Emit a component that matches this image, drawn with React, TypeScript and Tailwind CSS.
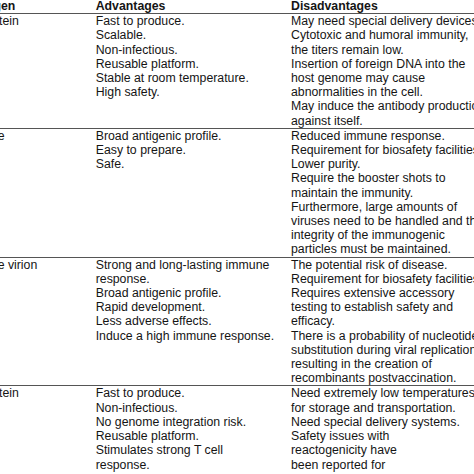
type Row = {
  antigen: string;
  adv: string[];
  dis: string[];
};

const rows: Row[] = [
  {
    antigen: 'S protein',
    adv: [
      'Fast to produce.',
      'Scalable.',
      'Non-infectious.',
      'Reusable platform.',
      'Stable at room temperature.',
      'High safety.',
    ],
    dis: [
      'May need special delivery devices.',
      'Cytotoxic and humoral immunity, the titers remain low.',
      'Insertion of foreign DNA into the host genome may cause abnormalities in the cell.',
      'May induce the antibody production against itself.',
    ],
  },
  {
    antigen: 'Whole',
    adv: ['Broad antigenic profile.', 'Easy to prepare.', 'Safe.'],
    dis: [
      'Reduced immune response.',
      'Requirement for biosafety facilities.',
      'Lower purity.',
      'Require the booster shots to maintain the immunity.',
      'Furthermore, large amounts of viruses need to be handled and the integrity of the immunogenic particles must be maintained.',
    ],
  },
  {
    antigen: 'Whole virion',
    adv: [
      'Strong and long-lasting immune response.',
      'Broad antigenic profile.',
      'Rapid development.',
      'Less adverse effects.',
      'Induce a high immune response.',
    ],
    dis: [
      'The potential risk of disease.',
      'Requirement for biosafety facilities.',
      'Requires extensive accessory testing to establish safety and efficacy.',
      'There is a probability of nucleotide substitution during viral replication, resulting in the creation of recombinants postvaccination.',
    ],
  },
  {
    antigen: 'S protein',
    adv: [
      'Fast to produce.',
      'Non-infectious.',
      'No genome integration risk.',
      'Reusable platform.',
      'Stimulates strong T cell response.',
    ],
    dis: [
      'Need extremely low temperatures for storage and transportation.',
      'Need special delivery systems.',
      'Safety issues with\nreactogenicity have\nbeen reported for\nmRNA vaccines.',
    ],
  },
];

const grid = 'grid grid-cols-[126.1px_195.3px_196px] border-b border-[#555]';

export default function App() {
  return (
    <div className="w-[474px] h-[474px] overflow-hidden bg-white text-[#151515] text-[12.3px] leading-[14.2px] font-['Liberation_Sans',Arial,sans-serif]">
      <div className="-ml-[30.4px] -mt-[1px] w-[520px]">
        {/* header */}
        <div className={`${grid} font-bold`}>
          <div className="whitespace-nowrap">Antigen</div>
          <div className="pr-[13.8px]">Advantages</div>
          <div>Disadvantages</div>
        </div>

        {rows.map((row, i) => (
          <div key={i} className={grid}>
            <div className="whitespace-nowrap">{row.antigen}</div>
            <div className="pr-[13.8px]">
              {row.adv.map((a) => (
                <p key={a}>{a}</p>
              ))}
            </div>
            <div>
              {row.dis.map((d) => (
                <p key={d} className="whitespace-pre-line">
                  {d}
                </p>
              ))}
            </div>
          </div>
        ))}
      </div>
    </div>
  );
}
